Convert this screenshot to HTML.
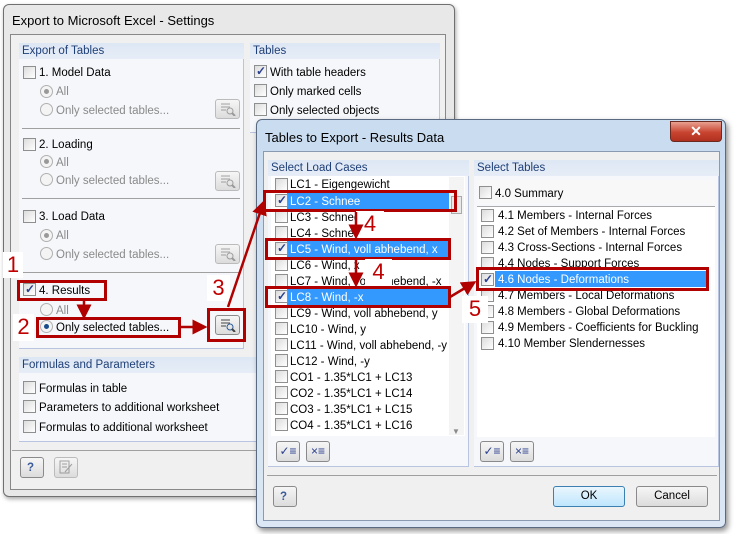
<!DOCTYPE html>
<html><head><style>
*{box-sizing:border-box;margin:0;padding:0}
body{width:734px;height:534px;background:#fff;position:relative;overflow:hidden;font-family:"Liberation Sans",sans-serif;font-size:11.5px;color:#000}
.a{position:absolute}
.t{position:absolute;white-space:nowrap;line-height:14px;margin-top:1px}
.cb{position:absolute;width:13px;height:13px;border:1px solid #8e8f8f;background:linear-gradient(135deg,#dcdcdc,#fff)}
.ck::after{content:"✓";position:absolute;left:1px;top:-2px;font-size:12px;color:#2a3f8f;font-weight:bold}
.rb{position:absolute;width:13px;height:13px;border:1px solid #b0b0b0;border-radius:50%;background:#f4f4f4}
.rb.on::after{content:"";position:absolute;left:3px;top:3px;width:5px;height:5px;border-radius:50%;background:#999}
.rb.bl::after{content:"";position:absolute;left:3px;top:3px;width:5px;height:5px;border-radius:50%;background:#1a4c8c}
.g{color:#8a8a8a}
.hd{position:absolute;height:16px;background:linear-gradient(#dde7f4,#e6edf7);color:#1f3f77;padding-left:3px;line-height:16px}
.pn{position:absolute;background:#f5f7fa;border-right:1px solid #b8c4e0;border-bottom:1px solid #b8c4e0}
.sep{position:absolute;height:1px;background:#a0a0a0}
.btn{position:absolute;border:1px solid #8a8a8a;border-radius:3px;background:linear-gradient(#f6f6f6,#dcdcdc)}
.red{position:absolute;border:3px solid #b00000}
.num{position:absolute;background:#fff;color:#c00000;font-size:22px;text-align:center;line-height:26px}
.hl{position:absolute;background:#3399ff;height:16px}
.mg{position:absolute}
</style></head><body>
<!-- back dialog -->
<div class="a" style="left:3px;top:4px;width:452px;height:493px;border:1px solid #707070;border-radius:6px;background:#e8e8e8;box-shadow:1px 2px 4px rgba(0,0,0,.35)"></div>
<div class="t" style="left:12px;top:13px;font-size:13px">Export to Microsoft Excel - Settings</div>
<div class="a" style="left:10px;top:34px;width:436px;height:456px;border:1px solid #888;background:#f0f0f0"></div>
<div class="pn" style="left:19px;top:43px;width:225px;height:306px"></div>
<div class="hd" style="left:19px;top:43px;width:225px">Export of Tables</div>
<div class="pn" style="left:250px;top:43px;width:190px;height:90px"></div>
<div class="hd" style="left:250px;top:43px;width:190px">Tables</div>
<div class="cb ck" style="left:254px;top:65px"></div><div class="t" style="left:270px;top:65px">With table headers</div>
<div class="cb" style="left:254px;top:84px"></div><div class="t" style="left:270px;top:84px">Only marked cells</div>
<div class="cb" style="left:254px;top:103px"></div><div class="t" style="left:270px;top:103px">Only selected objects</div>

<div class="cb" style="left:23px;top:66px"></div><div class="t" style="left:39px;top:65px">1. Model Data</div>
<div class="rb on" style="left:40px;top:85px"></div><div class="t g" style="left:56px;top:84px">All</div>
<div class="rb" style="left:40px;top:103px"></div><div class="t g" style="left:56px;top:103px">Only selected tables...</div>
<div class="btn" style="left:215px;top:99px;width:25px;height:20px;border-color:#bbb"></div>
<svg class="mg" style="left:219px;top:102px;opacity:.5" width="18" height="14"><g stroke="#555" fill="none"><path d="M2,2h9M2,5h9M2,8h5"/><circle cx="11" cy="9" r="3"/><path d="M13,11l3,3" stroke-width="2"/></g></svg>
<div class="sep" style="left:22px;top:128px;width:218px"></div>
<div class="cb" style="left:23px;top:138px"></div><div class="t" style="left:39px;top:137px">2. Loading</div>
<div class="rb on" style="left:40px;top:155px"></div><div class="t g" style="left:56px;top:155px">All</div>
<div class="rb" style="left:40px;top:173px"></div><div class="t g" style="left:56px;top:173px">Only selected tables...</div>
<div class="btn" style="left:215px;top:171px;width:25px;height:20px;border-color:#bbb"></div>
<svg class="mg" style="left:219px;top:174px;opacity:.5" width="18" height="14"><g stroke="#555" fill="none"><path d="M2,2h9M2,5h9M2,8h5"/><circle cx="11" cy="9" r="3"/><path d="M13,11l3,3" stroke-width="2"/></g></svg>
<div class="sep" style="left:22px;top:198px;width:218px"></div>
<div class="cb" style="left:23px;top:210px"></div><div class="t" style="left:39px;top:209px">3. Load Data</div>
<div class="rb on" style="left:40px;top:229px"></div><div class="t g" style="left:56px;top:228px">All</div>
<div class="rb" style="left:40px;top:247px"></div><div class="t g" style="left:56px;top:247px">Only selected tables...</div>
<div class="btn" style="left:215px;top:244px;width:25px;height:20px;border-color:#bbb"></div>
<svg class="mg" style="left:219px;top:247px;opacity:.5" width="18" height="14"><g stroke="#555" fill="none"><path d="M2,2h9M2,5h9M2,8h5"/><circle cx="11" cy="9" r="3"/><path d="M13,11l3,3" stroke-width="2"/></g></svg>
<div class="sep" style="left:22px;top:272px;width:218px"></div>
<div class="cb ck" style="left:23px;top:283px"></div><div class="t" style="left:39px;top:283px">4. Results</div>
<div class="rb" style="left:40px;top:303px"></div><div class="t g" style="left:56px;top:303px">All</div>
<div class="rb bl" style="left:40px;top:320px"></div><div class="t" style="left:56px;top:320px">Only selected tables...</div>
<div class="btn" style="left:215px;top:315px;width:25px;height:20px"></div>
<svg class="mg" style="left:219px;top:318px" width="18" height="14"><g stroke="#444" fill="none"><path d="M2,2h9M2,5h9M2,8h5"/><circle cx="11" cy="9" r="3" stroke="#2a5a9a"/><path d="M13,11l3,3" stroke-width="2"/></g></svg>

<div class="pn" style="left:19px;top:357px;width:240px;height:85px"></div>
<div class="hd" style="left:19px;top:357px;width:240px">Formulas and Parameters</div>
<div class="cb" style="left:23px;top:381px"></div><div class="t" style="left:39px;top:381px">Formulas in table</div>
<div class="cb" style="left:23px;top:400px"></div><div class="t" style="left:39px;top:400px">Parameters to additional worksheet</div>
<div class="cb" style="left:23px;top:420px"></div><div class="t" style="left:39px;top:420px">Formulas to additional worksheet</div>
<div class="sep" style="left:12px;top:450px;width:245px"></div>
<div class="btn" style="left:20px;top:457px;width:24px;height:21px"></div><div class="t" style="left:27px;top:460px;color:#3a5a9a;font-weight:bold">?</div>
<div class="btn" style="left:54px;top:457px;width:24px;height:21px;border-color:#bbb"></div>
<svg class="mg" style="left:59px;top:460px;opacity:.5" width="14" height="15"><g stroke="#555" fill="none"><rect x="1" y="1" width="9" height="12"/><path d="M3,4h5M3,7h5M6,12l7-8"/></g></svg>

<!-- front dialog -->
<div class="a" style="left:256px;top:119px;width:470px;height:409px;border:1px solid #5a6a80;border-radius:6px;background:linear-gradient(#c9dcf0,#dbe7f4);box-shadow:2px 3px 6px rgba(0,0,0,.45)"></div>
<div class="t" style="left:265px;top:130px;font-size:13px">Tables to Export - Results Data</div>
<div class="a" style="left:670px;top:121px;width:52px;height:21px;border:1px solid #6b2a20;border-radius:0 0 4px 4px;background:linear-gradient(#e8a090,#c84430 55%,#b03020);color:#fff;text-align:center;font-weight:bold;font-size:14px;line-height:19px">✕</div>
<div class="a" style="left:263px;top:151px;width:457px;height:370px;background:#f0f0f0;border:1px solid #8a9ab0"></div>
<div class="pn" style="left:268px;top:160px;width:201px;height:307px"></div>
<div class="hd" style="left:268px;top:160px;width:201px">Select Load Cases</div>
<div class="a" style="left:271px;top:176px;width:194px;height:260px;background:#fff"></div>
<div class="a" style="left:449px;top:177px;width:15px;height:258px;background:#f4f4f4"></div>
<div class="t g" style="left:452px;top:188px;font-size:8px">▲</div>
<div class="a" style="left:451px;top:196px;width:11px;height:18px;border:1px solid #aaa;background:#e8e8e8"></div>
<div class="t g" style="left:452px;top:424px;font-size:8px">▼</div>
<div class="hl" style="left:287px;top:193px;width:162px"></div>
<div class="hl" style="left:287px;top:241px;width:162px"></div>
<div class="hl" style="left:287px;top:289px;width:162px"></div>

<div class="cb" style="left:275px;top:178px"></div><div class="t" style="left:290px;top:177px">LC1 - Eigengewicht</div>
<div class="cb ck" style="left:275px;top:194px"></div><div class="t" style="left:290px;top:194px;color:#fff">LC2 - Schnee</div>
<div class="cb" style="left:275px;top:210px"></div><div class="t" style="left:290px;top:210px">LC3 - Schnee 1/ 1</div>
<div class="cb" style="left:275px;top:226px"></div><div class="t" style="left:290px;top:226px">LC4 - Schnee 1/ 2</div>
<div class="cb ck" style="left:275px;top:242px"></div><div class="t" style="left:290px;top:242px;color:#fff">LC5 - Wind, voll abhebend, x</div>
<div class="cb" style="left:275px;top:258px"></div><div class="t" style="left:290px;top:258px">LC6 - Wind, x</div>
<div class="cb" style="left:275px;top:274px"></div><div class="t" style="left:290px;top:274px">LC7 - Wind, voll abhebend, -x</div>
<div class="cb ck" style="left:275px;top:290px"></div><div class="t" style="left:290px;top:290px;color:#fff">LC8 - Wind, -x</div>
<div class="cb" style="left:275px;top:306px"></div><div class="t" style="left:290px;top:306px">LC9 - Wind, voll abhebend, y</div>
<div class="cb" style="left:275px;top:322px"></div><div class="t" style="left:290px;top:322px">LC10 - Wind, y</div>
<div class="cb" style="left:275px;top:338px"></div><div class="t" style="left:290px;top:338px">LC11 - Wind, voll abhebend, -y</div>
<div class="cb" style="left:275px;top:354px"></div><div class="t" style="left:290px;top:354px">LC12 - Wind, -y</div>
<div class="cb" style="left:275px;top:370px"></div><div class="t" style="left:290px;top:370px">CO1 - 1.35*LC1 + LC13</div>
<div class="cb" style="left:275px;top:386px"></div><div class="t" style="left:290px;top:386px">CO2 - 1.35*LC1 + LC14</div>
<div class="cb" style="left:275px;top:402px"></div><div class="t" style="left:290px;top:402px">CO3 - 1.35*LC1 + LC15</div>
<div class="cb" style="left:275px;top:418px"></div><div class="t" style="left:290px;top:418px">CO4 - 1.35*LC1 + LC16</div>
<div class="btn" style="left:276px;top:441px;width:24px;height:21px;color:#2a3f8f;font-size:12px;text-align:center;line-height:19px">✓≡</div>
<div class="btn" style="left:306px;top:441px;width:24px;height:21px;color:#2a3f8f;font-size:12px;text-align:center;line-height:19px">×≡</div>

<div class="pn" style="left:474px;top:160px;width:245px;height:307px"></div>
<div class="hd" style="left:474px;top:160px;width:245px">Select Tables</div>
<div class="a" style="left:477px;top:180px;width:238px;height:24px;background:#f8f8f8"></div>
<div class="a" style="left:477px;top:206px;width:238px;height:231px;background:#fff;border-top:1px solid #aaa"></div>
<div class="cb" style="left:479px;top:186px"></div><div class="t" style="left:495px;top:186px">4.0 Summary</div>
<div class="hl" style="left:495px;top:271px;width:213px"></div>
<div class="cb" style="left:481px;top:209px"></div><div class="t" style="left:498px;top:208px">4.1 Members - Internal Forces</div>
<div class="cb" style="left:481px;top:225px"></div><div class="t" style="left:498px;top:224px">4.2 Set of Members - Internal Forces</div>
<div class="cb" style="left:481px;top:241px"></div><div class="t" style="left:498px;top:240px">4.3 Cross-Sections - Internal Forces</div>
<div class="cb" style="left:481px;top:257px"></div><div class="t" style="left:498px;top:256px">4.4 Nodes - Support Forces</div>
<div class="cb ck" style="left:481px;top:273px"></div><div class="t" style="left:498px;top:272px;color:#fff">4.6 Nodes - Deformations</div>
<div class="cb" style="left:481px;top:289px"></div><div class="t" style="left:498px;top:288px">4.7 Members - Local Deformations</div>
<div class="cb" style="left:481px;top:305px"></div><div class="t" style="left:498px;top:304px">4.8 Members - Global Deformations</div>
<div class="cb" style="left:481px;top:321px"></div><div class="t" style="left:498px;top:320px">4.9 Members - Coefficients for Buckling</div>
<div class="cb" style="left:481px;top:337px"></div><div class="t" style="left:498px;top:336px">4.10 Member Slendernesses</div>
<div class="btn" style="left:480px;top:441px;width:24px;height:21px;color:#2a3f8f;font-size:12px;text-align:center;line-height:19px">✓≡</div>
<div class="btn" style="left:510px;top:441px;width:24px;height:21px;color:#2a3f8f;font-size:12px;text-align:center;line-height:19px">×≡</div>
<div class="sep" style="left:267px;top:475px;width:450px"></div>
<div class="btn" style="left:273px;top:486px;width:24px;height:21px"></div><div class="t" style="left:280px;top:489px;color:#3a5a9a;font-weight:bold">?</div>
<div class="btn" style="left:553px;top:486px;width:72px;height:21px;border-color:#3c7fb1;background:linear-gradient(#eaf6fd,#bee6fd);text-align:center;line-height:19px">OK</div>
<div class="btn" style="left:636px;top:486px;width:72px;height:21px;text-align:center;line-height:19px">Cancel</div>

<!-- annotations -->
<div class="red" style="left:17px;top:280px;width:90px;height:21px"></div>
<div class="red" style="left:36px;top:317px;width:145px;height:21px"></div>
<div class="red" style="left:207px;top:308px;width:39px;height:34px"></div>
<div class="red" style="left:263px;top:190px;width:194px;height:22px"></div>
<div class="red" style="left:265px;top:238px;width:186px;height:22px"></div>
<div class="red" style="left:265px;top:286px;width:186px;height:22px"></div>
<div class="red" style="left:476px;top:267px;width:233px;height:24px"></div>
<div class="num" style="left:3px;top:252px;width:20px;height:26px">1</div>
<div class="num" style="left:13px;top:314px;width:21px;height:27px">2</div>
<div class="num" style="left:207px;top:275px;width:23px;height:26px">3</div>
<div class="num" style="left:356px;top:211px;width:28px;height:27px">4</div>
<div class="num" style="left:365px;top:259px;width:27px;height:27px">4</div>
<div class="num" style="left:462px;top:296px;width:26px;height:27px">5</div>
<svg class="a" style="left:0;top:0" width="734" height="534">
<defs><marker id="m" markerWidth="6" markerHeight="6" refX="3" refY="3" orient="auto"><path d="M0,0L6,3L0,6z" fill="#b00000"/></marker></defs>
<g stroke="#b00000" stroke-width="2.5" fill="none">
<path d="M84,301V312" marker-end="url(#m)"/>
<path d="M181,327H200" marker-end="url(#m)"/>
<path d="M228,307L262,207" marker-end="url(#m)"/>
<path d="M356,212V232" marker-end="url(#m)"/>
<path d="M356,260V280" marker-end="url(#m)"/>
<path d="M450,297L470,285" marker-end="url(#m)"/>
</g></svg>
</body></html>
